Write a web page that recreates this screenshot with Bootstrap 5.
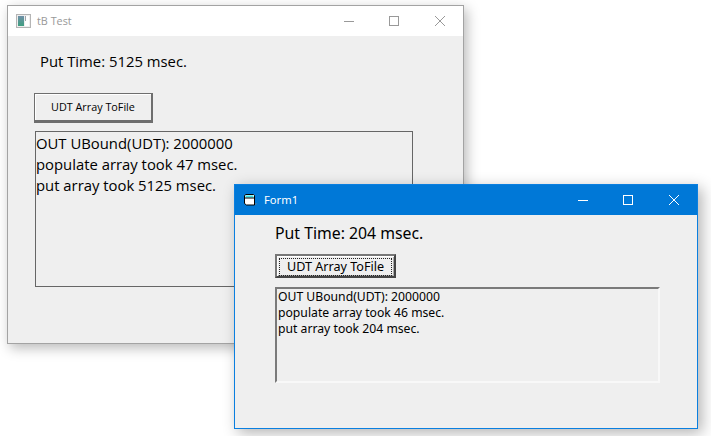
<!DOCTYPE html>
<html lang="en">
<head>
<meta charset="utf-8">
<title>tB Test and Form1</title>
<link href="https://cdn.jsdelivr.net/npm/bootstrap@5.3.0/dist/css/bootstrap.min.css" rel="stylesheet">
<style>
html,body{margin:0;height:436px;background:#fff;overflow:hidden}
.desk{position:relative;width:711px;height:436px}
.win{position:absolute;background:#efefef;box-sizing:border-box}
.win-a{left:7px;top:5px;width:457px;height:339px;border:1px solid #a3a3a3;box-shadow:3px 4px 12px rgba(0,0,0,.28);font-family:"Open Sans","Noto Sans",sans-serif;color:#000}
.win-b{left:234px;top:184px;width:464px;height:245px;border:1px solid #0a7fe0;box-shadow:4px 4px 14px rgba(0,0,0,.3);font-family:"Noto Sans","DejaVu Sans",sans-serif;color:#000}
.bar{height:30px}
.bar-a{background:#fff;color:#999;font-size:10.8px;padding-left:8px}
.bar-b{background:#0078d7;color:#fff;font-size:11.2px;padding-left:9px}
.bar-name-a{margin-left:6px}
.bar-name-b{margin-left:6px}
.ctl{width:46px;height:30px}
.ctl svg{display:block}
.body-a{padding:0 0 0 26px}
.lbl-a{font-size:14.85px;line-height:20px;margin:15px 0 0 6px}
.cmd-a{display:block;width:119px;height:30px;margin:22px 0 0 0;padding:0;background:#efefef;border:1px solid #6e6e6e;border-right-width:2px;border-bottom-width:3px;border-radius:0;font-size:10.8px;font-weight:500;color:#000;font-family:inherit;box-shadow:inset 1px 1px 0 #fff}
.box-a{width:378px;height:156px;margin:8px 0 0 1px;border:1px solid #666;font-size:14.85px;line-height:21px;padding:1px 0 0 0}
.body-b{padding:0 0 0 40px}
.lbl-b{font-size:15.8px;line-height:20px;margin:8px 0 0 0}
.cmd-b{display:block;width:121px;height:24px;margin:11px 0 0 0;padding:0;background:#efefef;border:2px solid;border-color:#777 #444 #444 #777;border-radius:0;font-size:12.6px;color:#000;font-family:inherit;box-shadow:inset 1px 1px 0 #fff,inset -1px -1px 0 #aaa}
.focus-rect{display:block;margin:2px;line-height:16px;border:1px dotted #222}
.box-b{width:385px;height:96px;margin:9px 0 0 0;border:2px solid;border-color:#7a7a7a #f8f8f8 #f8f8f8 #7a7a7a;font-size:12.2px;line-height:16px;padding:0 0 0 1px}
.txt-line{white-space:nowrap}
</style>
</head>
<body>
<div class="desk">
  <div class="win win-a">
    <div class="bar bar-a d-flex align-items-center">
      <svg width="15" height="14" viewBox="0 0 15 14"><defs><linearGradient id="pane" x1="0" y1="0" x2="0" y2="1"><stop offset="0" stop-color="#6f8fa8"/><stop offset="1" stop-color="#3f9f80"/></linearGradient></defs><rect x=".5" y=".5" width="14" height="13" fill="#eee" stroke="#b5b5b5"/><rect x="2" y="2" width="6" height="10" fill="url(#pane)"/><rect x="9" y="2" width="4" height="10" fill="#fff"/><rect x="9" y="2" width="1" height="5" fill="#9aa4aa"/></svg>
      <span class="bar-name-a">tB Test</span>
      <div class="ms-auto d-flex">
        <div class="ctl"><svg width="46" height="30"><path d="M19 15.5h10" stroke="#999"/></svg></div>
        <div class="ctl"><svg width="46" height="30"><rect x="18.500" y="10.500" width="9" height="9" fill="none" stroke="#999"/></svg></div>
        <div class="ctl"><svg width="46" height="30"><path d="M18 10l10 10M28 10l-10 10" stroke="#999"/></svg></div>
      </div>
    </div>
    <div class="body-a">
      <div class="lbl-a">Put Time: 5125 msec.</div>
      <button class="cmd-a" type="button">UDT Array ToFile</button>
      <div class="box-a">
        <div class="txt-line">OUT UBound(UDT): 2000000</div>
        <div class="txt-line">populate array took 47 msec.</div>
        <div class="txt-line">put array took 5125 msec.</div>
      </div>
    </div>
  </div>
  <div class="win win-b">
    <div class="bar bar-b d-flex align-items-center">
      <svg width="14" height="12" viewBox="0 0 14 12"><path d="M.5 1.500L2 .5h7.500l1 1v9.500H2.500L.5 9.500z" fill="#fff" stroke="#000"/><path d="M1.500 1.500h8v2h-8z" fill="#35e3ea"/><path d="M1 4h9.500" stroke="#000"/><path d="M11 9.500h2.500L11.500 11z" fill="#6b7f8f"/></svg>
      <span class="bar-name-b">Form1</span>
      <div class="ms-auto d-flex">
        <div class="ctl"><svg width="46" height="30"><path d="M19 15.500h10" stroke="#fff"/></svg></div>
        <div class="ctl"><svg width="46" height="30"><rect x="18.500" y="10.500" width="9" height="9" fill="none" stroke="#fff"/></svg></div>
        <div class="ctl"><svg width="46" height="30"><path d="M18 10l10 10M28 10l-10 10" stroke="#fff"/></svg></div>
      </div>
    </div>
    <div class="body-b">
      <div class="lbl-b">Put Time: 204 msec.</div>
      <button class="cmd-b" type="button"><span class="focus-rect">UDT Array ToFile</span></button>
      <div class="box-b">
        <div class="txt-line">OUT UBound(UDT): 2000000</div>
        <div class="txt-line">populate array took 46 msec.</div>
        <div class="txt-line">put array took 204 msec.</div>
      </div>
    </div>
  </div>
</div>
<script src="https://cdn.jsdelivr.net/npm/bootstrap@5.3.0/dist/js/bootstrap.bundle.min.js"></script>
</body>
</html>
